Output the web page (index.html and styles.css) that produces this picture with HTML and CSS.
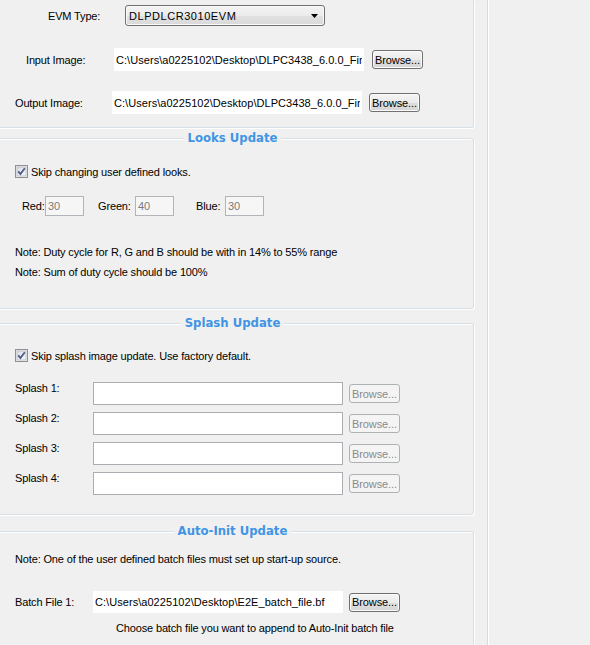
FILE: index.html
```html
<!DOCTYPE html>
<html>
<head>
<meta charset="utf-8">
<link rel="stylesheet" href="styles.css">
</head>
<body>
<div class="app">
  <div class="left">
    <div class="group top-group">
      <div class="row row-evm">
        <span class="lbl lbl-evm">EVM Type:</span>
        <div class="combo"><span class="combo-text">DLPDLCR3010EVM</span><svg class="arrow" width="7" height="4" viewBox="0 0 7 4"><polygon points="0,0 7,0 3.5,4" fill="#000"/></svg></div>
      </div>
      <div class="row row-in">
        <span class="lbl lbl-in">Input Image:</span>
        <input class="path" readonly value="C:\Users\a0225102\Desktop\DLPC3438_6.0.0_Firmware.img">
        <button class="btn btn-in">Browse...</button>
      </div>
      <div class="row row-out">
        <span class="lbl lbl-out">Output Image:</span>
        <input class="path" readonly value="C:\Users\a0225102\Desktop\DLPC3438_6.0.0_Firmware_out.img">
        <button class="btn btn-out">Browse...</button>
      </div>
    </div>

    <fieldset class="group looks">
      <legend>Looks Update</legend>
      <label class="check">
        <span class="box"><svg width="13" height="13" viewBox="0 0 13 13"><defs><linearGradient id="cb1" x1="0" y1="0" x2="1" y2="1"><stop offset="0" stop-color="#d9dce2"/><stop offset="1" stop-color="#f7f8fa"/></linearGradient></defs><rect x="0.5" y="0.5" width="12" height="12" fill="#f4f4f4" stroke="#8e8f8f"/><rect x="2" y="2" width="9" height="9" fill="url(#cb1)" stroke="#b3b8c0" stroke-width="0.8"/><path d="M3.3 6.4 L5.4 9 L9.8 3.3" fill="none" stroke="#4a5b8c" stroke-width="1.8"/></svg></span>
        Skip changing user defined looks.
      </label>
      <div class="colors">
        <span class="clbl clbl-red">Red:</span><input class="num" readonly value="30">
        <span class="clbl clbl-green">Green:</span><input class="num" readonly value="40">
        <span class="clbl clbl-blue">Blue:</span><input class="num" readonly value="30">
      </div>
      <p class="note note-first">Note: Duty cycle for R, G and B should be with in 14% to 55% range</p>
      <p class="note note-second">Note: Sum of duty cycle should be 100%</p>
    </fieldset>

    <fieldset class="group splash">
      <legend>Splash Update</legend>
      <label class="check">
        <span class="box"><svg width="13" height="13" viewBox="0 0 13 13"><defs><linearGradient id="cb2" x1="0" y1="0" x2="1" y2="1"><stop offset="0" stop-color="#d9dce2"/><stop offset="1" stop-color="#f7f8fa"/></linearGradient></defs><rect x="0.5" y="0.5" width="12" height="12" fill="#f4f4f4" stroke="#8e8f8f"/><rect x="2" y="2" width="9" height="9" fill="url(#cb2)" stroke="#b3b8c0" stroke-width="0.8"/><path d="M3.3 6.4 L5.4 9 L9.8 3.3" fill="none" stroke="#4a5b8c" stroke-width="1.8"/></svg></span>
        Skip splash image update. Use factory default.
      </label>
      <div class="splash-rows">
        <div class="srow"><span class="slbl">Splash 1:</span><input class="field"><button class="btn btn-dis" disabled>Browse...</button></div>
        <div class="srow"><span class="slbl">Splash 2:</span><input class="field"><button class="btn btn-dis" disabled>Browse...</button></div>
        <div class="srow"><span class="slbl">Splash 3:</span><input class="field"><button class="btn btn-dis" disabled>Browse...</button></div>
        <div class="srow"><span class="slbl">Splash 4:</span><input class="field"><button class="btn btn-dis" disabled>Browse...</button></div>
      </div>
    </fieldset>

    <fieldset class="group autoinit">
      <legend>Auto-Init Update</legend>
      <p class="note note-auto">Note: One of the user defined batch files must set up start-up source.</p>
      <div class="brow">
        <span class="slbl blbl">Batch File 1:</span>
        <input class="path batch" readonly value="C:\Users\a0225102\Desktop\E2E_batch_file.bf">
        <button class="btn btn-batch">Browse...</button>
      </div>
      <p class="caption">Choose batch file you want to append to Auto-Init batch file</p>
    </fieldset>
  </div>
  <div class="splitter"></div>
  <div class="right"></div>
</div>
</body>
</html>
```

FILE: styles.css
```css
* { box-sizing: border-box; }

html, body {
  margin: 0;
  height: 100%;
  overflow: hidden;
}

body {
  background: #f0f0f0;
  font-family: "Liberation Sans", Arial, sans-serif;
  font-size: 11px;
  color: #000;
  letter-spacing: -0.15px;
}

.app {
  display: flex;
  height: 100%;
  overflow: hidden;
}

.left {
  width: 475px;
  flex: none;
  overflow: hidden;
}

.splitter {
  width: 13px;
  flex: none;
  border-right: 1px solid #dadada;
  box-shadow: 1px 0 0 #ffffff;
}

.right { flex: 1; }

/* group boxes */
.group {
  margin: 0 0 0 -9px;
  width: 483px;
  min-width: 0;
  border: 1px solid #d5dfe5;
  border-radius: 3px;
  box-shadow: inset 1px 1px 0 #ffffff, 1px 1px 0 #ffffff;
}

fieldset.group {
  padding: 0 23px 0 23px;
}

fieldset.group legend {
  margin: 0 auto;
  padding: 0 4px;
  height: 15px;
  line-height: 15px;
  font-family: "DejaVu Sans", sans-serif;
  font-weight: bold;
  font-size: 11.7px;
  letter-spacing: 0;
  color: #3f95e4;
  background: #f0f0f0;
}

.top-group {
  border-top: none;
  border-radius: 0 0 3px 3px;
  padding: 5px 0 13px 23px;
  box-shadow: 1px 1px 0 #ffffff;
}

.row {
  display: flex;
  align-items: center;
}

.row-evm { height: 21px; }
.row-in { height: 23px; margin-top: 22px; }
.row-out { height: 23px; margin-top: 20px; }

.lbl { flex: none; }
.lbl-evm { margin-left: 33px; width: 77px; }
.lbl-in { margin-left: 11px; width: 88px; }
.lbl-out { width: 97px; }

.combo {
  width: 200px;
  height: 21px;
  border: 1px solid #707070;
  border-radius: 3px;
  background: linear-gradient(#f3f3f3, #ececec 50%, #e1e1e1 51%, #d9d9d9);
  box-shadow: inset 0 0 0 1px #fafafa;
  display: flex;
  align-items: center;
  justify-content: space-between;
  padding: 0 6px 0 3px;
}

.combo-text { letter-spacing: 0.55px; }

.arrow { display: block; margin-top: 1px; }

.path {
  width: 250px;
  height: 23px;
  border: none;
  background: #ffffff;
  padding: 0 2px;
  margin: 0;
  font: inherit;
  letter-spacing: 0.05px;
  color: #000;
  outline: none;
}

.btn {
  flex: none;
  width: 51px;
  height: 19px;
  padding: 0;
  margin: 0;
  font: inherit;
  letter-spacing: -0.1px;
  color: #000;
  border: 1px solid #707070;
  border-radius: 3px;
  background: linear-gradient(#f4f4f4, #ebebeb 50%, #dedede 51%, #d6d6d6);
  box-shadow: inset 0 0 0 1px #fbfbfb;
}

.btn-in { margin-left: 8px; }
.btn-out { margin-left: 7px; }

.btn-dis {
  border-color: #adb2b5;
  background: #f4f4f4;
  color: #8a8a8a;
  box-shadow: none;
  margin-left: 6px;
}

/* checkbox */
.check {
  display: flex;
  align-items: center;
  height: 13px;
}

.box {
  width: 13px;
  height: 13px;
  margin-right: 3px;
  flex: none;
}

.box svg { display: block; }

.looks .check { margin-top: 19px; }
.splash .check { margin-top: 18px; }

/* colors */
.colors {
  display: flex;
  align-items: center;
  height: 20px;
  margin-top: 18px;
}

.clbl { flex: none; }
.clbl-red { margin-left: 7px; width: 23px; }
.clbl-green { margin-left: 14px; width: 37px; }
.clbl-blue { margin-left: 22px; width: 29px; }

.num {
  width: 39px;
  height: 20px;
  margin: 0;
  padding: 0 2px;
  border: 1px solid #b1b4b8;
  background: #f6f6f6;
  font: inherit;
  color: #7a7a7a;
  outline: none;
}

.note {
  margin: 0;
  line-height: 16px;
}

.note-first { margin-top: 28px; }
.note-second { margin-top: 4px; }

fieldset.looks { margin-top: 3px; padding-bottom: 28px; }

/* splash */
fieldset.splash { margin-top: 7px; padding-bottom: 19px; }

.splash-rows {
  display: flex;
  flex-direction: column;
  gap: 7px;
  margin-top: 20px;
}

.srow {
  display: flex;
  align-items: center;
  height: 23px;
}

.slbl {
  flex: none;
  width: 78px;
  align-self: flex-start;
  line-height: 12px;
}

.field {
  width: 250px;
  height: 23px;
  margin: 0;
  padding: 0 2px;
  border: 1px solid #abadb3;
  background: #ffffff;
  font: inherit;
  outline: none;
}

/* auto-init */
fieldset.autoinit { margin-top: 9px; padding-bottom: 30px; }

.note-auto { margin-top: 12px; }

.brow {
  display: flex;
  align-items: center;
  height: 22px;
  margin-top: 24px;
}

.blbl { align-self: center; }

.batch { height: 22px; }

.btn-batch { margin-left: 6px; }

.caption {
  margin: 8px 0 0 101px;
  line-height: 14px;
}
```
